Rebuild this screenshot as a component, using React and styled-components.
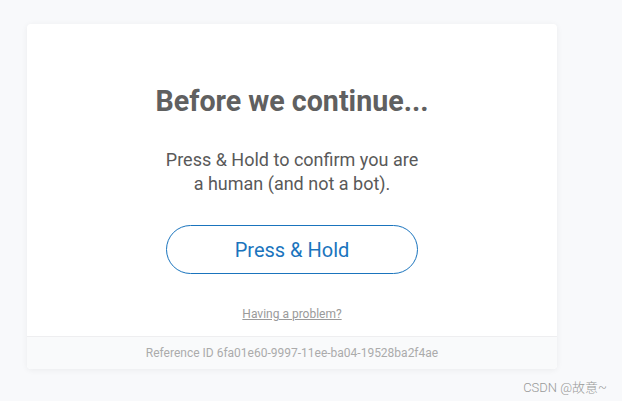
import React from "react";
import styled, { createGlobalStyle } from "styled-components";

const GlobalStyle = createGlobalStyle`
  html, body {
    margin: 0;
    padding: 0;
    background-color: #f8f9fb;
    font-family: Roboto, "Liberation Sans", Arial, sans-serif;
  }
`;

const Page = styled.div`
  width: 622px;
  height: 401px;
  box-sizing: border-box;
  padding-top: 24px;
  display: flex;
  flex-direction: column;
  overflow: hidden;
`;

const Card = styled.div`
  width: 530px;
  margin-left: 27px;
  background-color: #ffffff;
  border-radius: 4px;
  box-shadow: 0 1px 6px rgba(0, 0, 0, 0.06);
  overflow: hidden;
`;

const Body = styled.div`
  display: flex;
  flex-direction: column;
  align-items: center;
  padding: 60px 0 14px;
`;

const Title = styled.h1`
  margin: 0;
  font-size: 28.6px;
  line-height: 34px;
  font-weight: 700;
  color: #606060;
`;

const Message = styled.p`
  margin: 30px 0 0;
  font-size: 18px;
  line-height: 24px;
  color: #595959;
  text-align: center;
`;

const HoldButton = styled.button`
  margin-top: 29px;
  width: 252px;
  height: 49px;
  border: 1px solid #1a74bd;
  border-radius: 25px;
  background: #ffffff;
  color: #1a74bd;
  font-family: inherit;
  font-size: 20px;
  cursor: pointer;
`;

const HelpLink = styled.a`
  margin-top: 32px;
  font-size: 12px;
  line-height: 16px;
  color: #9a9a9a;
  text-decoration: underline;
  cursor: pointer;
`;

const Footer = styled.div`
  border-top: 1px solid #eeeef0;
  background-color: #f9fafb;
  height: 32px;
  display: flex;
  align-items: center;
  justify-content: center;
  font-size: 12px;
  color: #ababab;
`;

const Watermark = styled.div`
  align-self: flex-end;
  margin: 8px 15px 0 0;
  font-family: Roboto, "Noto Sans CJK SC", sans-serif;
  font-size: 13px;
  font-weight: 300;
  color: #999999;
`;

const App = () => {
  return (
    <>
      <GlobalStyle />
      <Page>
        <Card>
          <Body>
            <Title>Before we continue...</Title>
            <Message>
              Press &amp; Hold to confirm you are
              <br />
              a human (and not a bot).
            </Message>
            <HoldButton>Press &amp; Hold</HoldButton>
            <HelpLink>Having a problem?</HelpLink>
          </Body>
          <Footer>Reference ID 6fa01e60-9997-11ee-ba04-19528ba2f4ae</Footer>
        </Card>
        <Watermark>CSDN @故意~</Watermark>
      </Page>
    </>
  );
};

export default App;
